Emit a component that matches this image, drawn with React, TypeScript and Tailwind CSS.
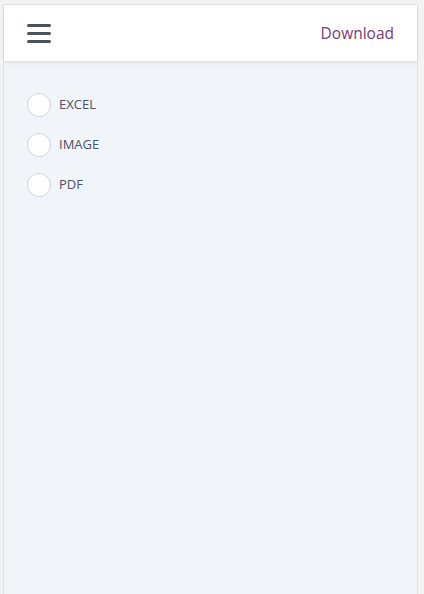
import React from "react";

const options = ["EXCEL", "IMAGE", "PDF"];

export default function App() {
  return (
    <div
      className="h-[594px] w-[424px] bg-[#f3f3f3] pl-[3px] pr-[6px] pt-[4px] overflow-hidden"
      style={{ fontFamily: '"Open Sans", "Noto Sans", sans-serif' }}
    >
      <div className="flex h-[600px] flex-col border border-[#e2e2e2] bg-[#f1f4f8]">
        {/* Top bar */}
        <header className="flex h-[56px] shrink-0 items-center justify-between bg-white pl-[23px] pr-[23px] shadow-[0_2px_4px_rgba(0,0,0,0.08)]">
          <button aria-label="Menu" className="flex flex-col gap-[5px]">
            <span className="block h-[3px] w-[24px] rounded-full bg-[#4a525b]" />
            <span className="block h-[3px] w-[24px] rounded-full bg-[#4a525b]" />
            <span className="block h-[3px] w-[24px] rounded-full bg-[#4a525b]" />
          </button>
          <button className="mt-[2px] text-[15.5px] font-medium text-[#7a3b6e]">Download</button>
        </header>

        {/* Export options */}
        <div className="flex flex-col pl-[23px] pt-[24px]">
          {options.map((opt) => (
            <label key={opt} className="flex h-10 cursor-pointer items-center gap-2">
              <span className="h-6 w-6 rounded-full border border-[#cfd4da] bg-white" />
              <span className="text-[13px] text-[#4a5260]">{opt}</span>
            </label>
          ))}
        </div>
      </div>
    </div>
  );
}
